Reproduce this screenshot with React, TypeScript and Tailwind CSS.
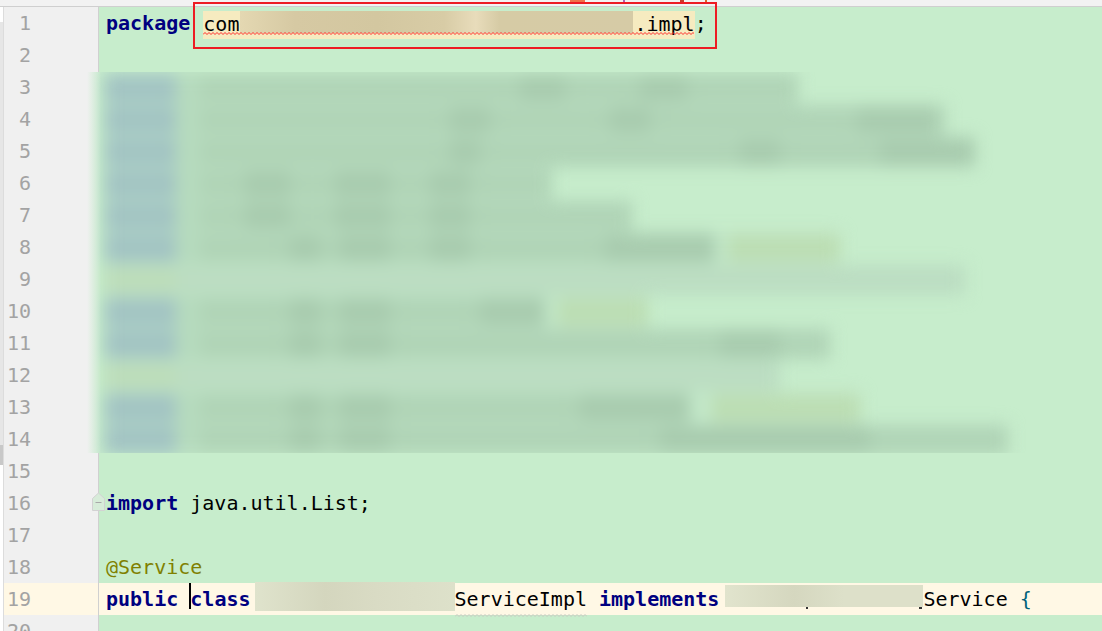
import React, { ReactNode } from 'react';

// kinds of blurred stretch: [end x on the page, kind]
type Seg = [number, string];

const kinds: Record<string, string> = {
  t: 'transparent',
  b: 'linear-gradient(to bottom,#abcfc5,#9fbfc2 50%,#abcfc5)',
  g: 'linear-gradient(to bottom,#b5d9bc,#aed2b4 50%,#b5d9bc)',
  d: 'linear-gradient(to bottom,#b0d4b7,#a5c8ab 50%,#b0d4b7)',
  y: 'linear-gradient(to bottom,#c0e1be,#badcae 50%,#c0e1be)',
  l: 'linear-gradient(to bottom,#bde1c4,#bbdbc1 50%,#bde1c4)',
  o: 'linear-gradient(to bottom,#bee1c1,#bcdbb7 50%,#bee1c1)',
  w: '#b6dbbe',
  n: '#c3e8c9',
};

const blurRows: Seg[][] = [
  [[104, 't'], [176, 'b'], [200, 'w'], [520, 'g'], [565, 'd'], [640, 'g'], [687, 'd'], [798, 'g']],
  [[104, 't'], [176, 'b'], [200, 'w'], [450, 'g'], [490, 'd'], [610, 'g'], [650, 'd'], [857, 'g'], [935, 'd'], [945, 'g']],
  [[104, 't'], [176, 'b'], [200, 'w'], [450, 'g'], [480, 'd'], [740, 'g'], [780, 'd'], [880, 'g'], [975, 'd']],
  [[104, 't'], [176, 'b'], [200, 'w'], [245, 'g'], [290, 'd'], [335, 'g'], [390, 'd'], [430, 'g'], [470, 'd'], [552, 'g']],
  [[104, 't'], [176, 'b'], [200, 'w'], [245, 'g'], [290, 'd'], [335, 'g'], [390, 'd'], [430, 'g'], [470, 'd'], [632, 'g']],
  [[104, 't'], [176, 'b'], [200, 'w'], [290, 'g'], [320, 'd'], [340, 'g'], [390, 'd'], [430, 'g'], [470, 'd'], [605, 'g'], [715, 'd'], [728, 'n'], [840, 'y']],
  [[104, 't'], [176, 'o'], [500, 'l'], [700, 'l'], [850, 'l'], [965, 'l']],
  [[104, 't'], [176, 'b'], [200, 'w'], [290, 'g'], [320, 'd'], [340, 'g'], [390, 'd'], [480, 'g'], [545, 'd'], [558, 'n'], [648, 'y']],
  [[104, 't'], [176, 'b'], [200, 'w'], [290, 'g'], [320, 'd'], [340, 'g'], [390, 'd'], [585, 'g'], [720, 'g'], [780, 'd'], [830, 'g']],
  [[104, 't'], [176, 'o'], [500, 'l'], [700, 'l'], [780, 'l']],
  [[104, 't'], [176, 'b'], [200, 'w'], [290, 'g'], [320, 'd'], [340, 'g'], [390, 'd'], [580, 'g'], [690, 'd'], [712, 'n'], [860, 'y']],
  [[104, 't'], [176, 'b'], [200, 'w'], [290, 'g'], [320, 'd'], [340, 'g'], [390, 'd'], [590, 'g'], [660, 'g'], [870, 'd'], [1008, 'g']],
];

const Squiggle = ({ color, width, className }: { color: string; width: number; className: string }) => (
  <svg width={width} height={3} className={className}>
    <polyline
      fill="none"
      stroke={color}
      strokeWidth="1"
      points={Array.from({ length: Math.ceil(width / 2) + 1 }, (_, i) => `${i * 2},${i % 2 ? 0.5 : 2.5}`).join(' ')}
    />
  </svg>
);

const Kw = ({ children }: { children: ReactNode }) => <span className="font-bold text-[#000080]">{children}</span>;

const Line = ({ n, active, children }: { n: number; active?: boolean; children?: ReactNode }) => (
  <div className={`flex h-8 shrink-0 ${active ? 'bg-[#fff8e5]' : ''}`}>
    <div className={`w-[95px] shrink-0 border-r border-[#d0d0d0] pr-[67px] text-right leading-8 text-[#a3a3a3] ${active ? '' : 'bg-[#f0f0f0]'}`}>
      {n}
    </div>
    <div className="flex items-center whitespace-pre pl-[7px] text-black">{children}</div>
  </div>
);

export default function App() {
  return (
    <div className="relative flex h-[631px] w-[1102px] flex-col overflow-hidden bg-[#c7edcc] font-['DejaVu_Sans_Mono','Liberation_Mono',monospace] text-[20px]">
      {/* window strip at the top, mostly cut off */}
      <div className="relative h-[7px] shrink-0 border-b border-[#cfcfcf] bg-[#f2f2f2]">
        <div className="absolute left-[570px] top-0 h-[2px] w-[15px] bg-[#f0704a]" />
        <div className="absolute left-[623px] top-0 h-[2px] w-[2px] bg-[#b05fb0]" />
        <div className="absolute left-[680px] top-0 h-[2px] w-[4px] bg-[#c83a2a]" />
        <div className="absolute left-[705px] top-0 h-[2px] w-[2px] bg-[#d9662a]" />
      </div>

      <div className="flex min-h-0 flex-1">
        {/* scroll strip */}
        <div className="flex w-1 shrink-0 flex-col border-r border-[#dcdcdc] bg-white">
          <div className="h-[15px] shrink-0" />
          <div className="h-[423px] shrink-0 bg-[#e6e6e6]" />
          <div className="h-5 shrink-0 bg-[#c8c8c8]" />
        </div>

        <div className="flex min-w-0 flex-1 flex-col">
          <Line n={1}>
            <Kw>package</Kw>
            <span className="ml-[13px] mt-1 flex h-7 items-start self-start bg-[#f6ebc0]">
              <span className="leading-[26px]">com</span>
              <span className="mx-px h-[22px] w-[393px] bg-[linear-gradient(to_right,#e4d8b2,#d6c9a3_14%,#d3c7a0_35%,#d8cca6_52%,#e8dcbb_60%,#d6cba5_66%,#d6cba6)]" />
              <span className="leading-[26px]">.impl</span>
            </span>
            ;
          </Line>
          <Line n={2} />
          {[3, 4, 5, 6, 7, 8, 9, 10, 11, 12, 13, 14].map((n) => (
            <Line key={n} n={n} />
          ))}
          <Line n={15} />
          <Line n={16}>
            <Kw>import</Kw> java.util.List;
          </Line>
          <Line n={17} />
          <Line n={18}>
            <span className="text-[#808000]">@Service</span>
          </Line>
          <Line n={19} active>
            <Kw>public </Kw>
            <span className="relative">
              <span className="absolute -left-px -top-[1px] h-[26px] w-[2px] bg-black" />
              <Kw>class</Kw>
            </span>
            <span className="-mt-px ml-[4px] h-[29px] w-[200px] self-start bg-[linear-gradient(to_right,#dfe3cc,#d4d6be_35%,#d9dbc4_60%,#dde1ca)]" />
            <span className="relative">
              ServiceImpl
              <Squiggle color="#c8c8c0" width={132} className="absolute -bottom-[3px] left-0" />
            </span>
            <span className="ml-3">
              <Kw>implements</Kw>
            </span>
            <span className="relative ml-[6px] mt-[2px] h-[22px] w-[198px] self-start bg-[linear-gradient(to_right,#e1e4cd,#d5d7bf_35%,#dde0c9_60%,#dde0c9)]">
              <span className="absolute -bottom-[2px] left-[81px] h-[2px] w-[2px] bg-[#333333]" />
              <span className="absolute -bottom-[2px] left-[194px] h-[2px] w-[3px] bg-[#333333]" />
            </span>
            Service <span className="text-[#00627a]">{'{'}</span>
          </Line>
          <Line n={20} />
        </div>
      </div>

      {/* blurred-out imports, painted over lines 3 to 14 */}
      <div className="absolute left-[87px] top-[72px] h-[381px] w-[1015px] overflow-hidden bg-[#c7edcc]">
        <div className="blur-[8px]">
          {blurRows.map((segs, i) => (
            <div key={i} className="flex h-8 items-center">
              {segs.map(([end, kind], j) => {
                const start = j === 0 ? 87 : segs[j - 1][0];
                return <div key={j} className="h-8" style={{ width: end - start, background: kinds[kind] }} />;
              })}
            </div>
          ))}
        </div>
        <div className="absolute inset-y-0 left-0 w-[14px] bg-[linear-gradient(to_right,#f0f0f0,rgba(240,240,240,0))]" />
      </div>

      {/* red underline of line 1 and the annotation box */}
      <Squiggle color="#ff2a2a" width={491} className="absolute left-[203px] top-[32px]" />
      <div className="absolute left-[193px] top-[2px] h-[47px] w-[524px] border-2 border-[#ed1c24]" />

      {/* fold marker of line 16 */}
      <svg width="15" height="20" className="absolute left-[91px] top-[492px]">
        <path d="M1.5 6.5 L7.5 1 L13.5 6.5 V18.5 H1.5 Z" fill="#d7ecd9" stroke="#d2d2d2" />
        <path d="M4.5 10.5 H10.5" stroke="#a8a8a8" />
      </svg>
    </div>
  );
}
